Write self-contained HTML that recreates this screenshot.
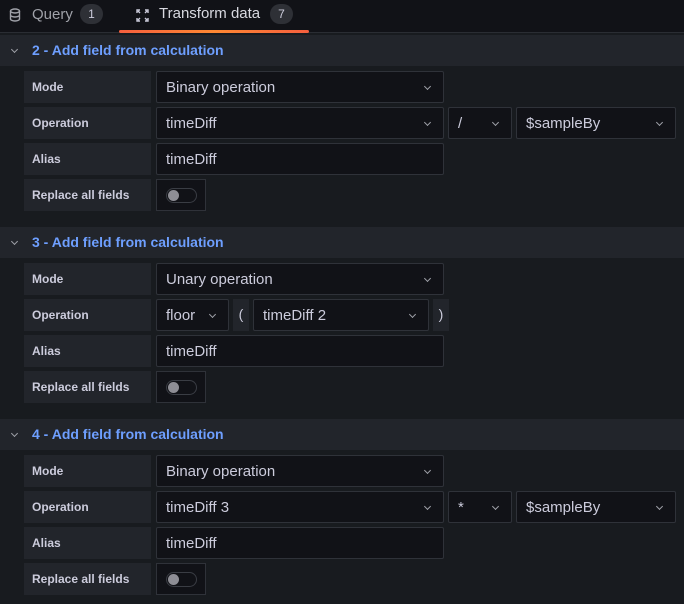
<!DOCTYPE html><html><head><style>
*{margin:0;padding:0;box-sizing:border-box}
body{width:684px;height:604px;background:#181b1f;font-family:"Liberation Sans",sans-serif;position:relative;overflow:hidden;color:#ccccdc}
.a{position:absolute}
.tabs{left:0;top:0;width:684px;height:33px;background:#111217;border-bottom:1px solid #2a2d33}
.hd{left:0;width:684px;height:31px;background:#22252b}
.hd span{position:absolute;left:32px;top:7px;font-size:14px;color:#6e9fff;font-weight:bold}
.lb{left:24px;width:127px;height:32px;background:#22252b;font-size:12px;font-weight:bold;padding:9px 0 0 8px;color:#ccccdc}
.in{height:32px;border:1px solid #2f3239;background:#111217;border-radius:2px;font-size:15px;padding:7px 0 0 9px;color:#ccccdc}
.ch{position:absolute;right:13px;top:12px;width:5px;height:5px;border-right:1.3px solid #9fa1a8;border-bottom:1.3px solid #9fa1a8;transform:rotate(45deg)}
.par{height:32px;background:#22252b;font-size:14px;text-align:center;padding-top:7px}
.tg{left:156px;width:50px;height:32px;border:1px solid #2f3239;background:#111217}
.tg i{position:absolute;left:9px;top:8px;width:31px;height:15px;border:1px solid #3a3d44;border-radius:8px}
.tg b{position:absolute;left:11px;top:10px;width:11px;height:11px;border-radius:50%;background:#8e8e95}
.badge{top:4px;height:20px;border-radius:10px;background:#2e3036;font-size:12px;color:#ccccdc;text-align:center;padding-top:3px}
.sc{left:12px;width:5px;height:5px;border-right:1.3px solid #9fa1a8;border-bottom:1.3px solid #9fa1a8;transform:rotate(45deg)}
</style></head><body>
<div class="a tabs"></div>
<svg class="a" style="left:9px;top:8px" width="12" height="14" viewBox="0 0 12 14"><ellipse cx="6" cy="3" rx="4.5" ry="2" fill="none" stroke="#9fa1a8" stroke-width="1.4"/><path d="M1.5 3v8c0 1.1 2 2 4.5 2s4.5-.9 4.5-2V3M1.5 7c0 1.1 2 2 4.5 2s4.5-.9 4.5-2" fill="none" stroke="#9fa1a8" stroke-width="1.4"/></svg>
<div class="a" style="left:32px;top:6px;font-size:15px;color:#9fa1a8">Query</div>
<div class="a badge" style="left:80px;width:23px">1</div>
<svg class="a" style="left:136px;top:9px" width="13" height="13" viewBox="0 0 13 13" fill="none" stroke="#ccccdc" stroke-width="1.4"><path d="M1 4V1h3M9 1h3v3M12 9v3H9M4 12H1V9M4 4l-2-2M9 4l2-2M9 9l2 2M4 9l-2 2"/></svg>
<div class="a" style="left:159px;top:5px;font-size:15px;color:#d8d9e0">Transform data</div>
<div class="a badge" style="left:270px;width:23px">7</div>
<div class="a" style="left:119px;top:30px;width:190px;height:3px;border-radius:2px;background:linear-gradient(90deg,#f55f3e,#ff8833,#f55f3e)"></div>

<div class="a hd" style="top:35px"><span>2 - Add field from calculation</span></div>
<div class="a sc" style="top:47px"></div>
<div class="a lb" style="top:71px">Mode</div><div class="a in" style="left:156px;top:71px;width:288px">Binary operation<i class="ch"></i></div>
<div class="a lb" style="top:107px">Operation</div><div class="a in" style="left:156px;top:107px;width:288px">timeDiff<i class="ch"></i></div>
<div class="a in" style="left:448px;top:107px;width:64px">/<i class="ch"></i></div>
<div class="a in" style="left:516px;top:107px;width:160px">$sampleBy<i class="ch"></i></div>
<div class="a lb" style="top:143px">Alias</div><div class="a in" style="left:156px;top:143px;width:288px">timeDiff</div>
<div class="a lb" style="top:179px">Replace all fields</div><div class="a tg" style="top:179px"><i></i><b></b></div>

<div class="a hd" style="top:227px"><span>3 - Add field from calculation</span></div>
<div class="a sc" style="top:239px"></div>
<div class="a lb" style="top:263px">Mode</div><div class="a in" style="left:156px;top:263px;width:288px">Unary operation<i class="ch"></i></div>
<div class="a lb" style="top:299px">Operation</div>
<div class="a in" style="left:156px;top:299px;width:73px">floor<i class="ch"></i></div>
<div class="a par" style="left:233px;top:299px;width:16px">(</div>
<div class="a in" style="left:253px;top:299px;width:176px">timeDiff 2<i class="ch"></i></div>
<div class="a par" style="left:433px;top:299px;width:16px">)</div>
<div class="a lb" style="top:335px">Alias</div><div class="a in" style="left:156px;top:335px;width:288px">timeDiff</div>
<div class="a lb" style="top:371px">Replace all fields</div><div class="a tg" style="top:371px"><i></i><b></b></div>

<div class="a hd" style="top:419px"><span>4 - Add field from calculation</span></div>
<div class="a sc" style="top:431px"></div>
<div class="a lb" style="top:455px">Mode</div><div class="a in" style="left:156px;top:455px;width:288px">Binary operation<i class="ch"></i></div>
<div class="a lb" style="top:491px">Operation</div><div class="a in" style="left:156px;top:491px;width:288px">timeDiff 3<i class="ch"></i></div>
<div class="a in" style="left:448px;top:491px;width:64px">*<i class="ch"></i></div>
<div class="a in" style="left:516px;top:491px;width:160px">$sampleBy<i class="ch"></i></div>
<div class="a lb" style="top:527px">Alias</div><div class="a in" style="left:156px;top:527px;width:288px">timeDiff</div>
<div class="a lb" style="top:563px">Replace all fields</div><div class="a tg" style="top:563px"><i></i><b></b></div>
</body></html>
